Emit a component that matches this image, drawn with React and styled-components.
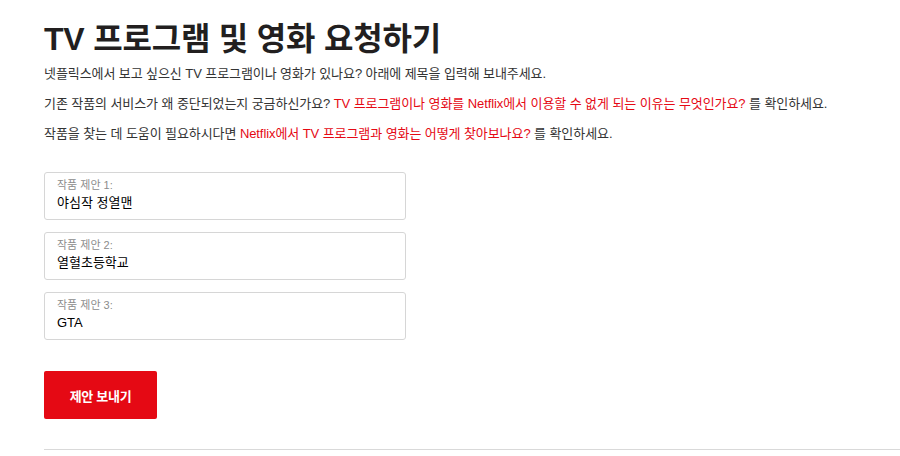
import React from "react";
import styled, { createGlobalStyle } from "styled-components";

const Global = createGlobalStyle`
  html, body { margin: 0; padding: 0; background: #fff; }
  body { font-family: "Liberation Sans", "Noto Sans CJK KR", Arial, sans-serif; color: #221f1f; }
  * { box-sizing: border-box; }
`;

const Page = styled.div`
  padding: 14px 0 0 44px;
  width: 900px;
  height: 456px;
  overflow: hidden;
`;

const Title = styled.h1`
  margin: 0 0 1px;
  font-size: 32px;
  font-weight: 700;
  line-height: 50px;
  letter-spacing: -0.2px;
  color: #221f1f;
`;

const Para = styled.p`
  margin: 0 0 12px;
  font-size: 13px;
  line-height: 18px;
  letter-spacing: -0.08px;
  color: #333;
`;

const Link = styled.a`
  color: #e50914;
  text-decoration: none;
`;

const Form = styled.form`
  margin-top: 29px;
  display: flex;
  flex-direction: column;
  gap: 12px;
  width: 362px;
`;

const Field = styled.label`
  display: flex;
  flex-direction: column;
  height: 48px;
  border: 1px solid #d6d6d6;
  border-radius: 3px;
  padding: 5px 12px 0;
`;

const FieldLabel = styled.span`
  font-size: 11px;
  line-height: 14px;
  color: #8c8c8c;
`;

const FieldValue = styled.span`
  font-size: 13px;
  line-height: 20px;
  margin-top: 1px;
  color: #000;
`;

const Submit = styled.button`
  margin-top: 31px;
  width: 113px;
  height: 48px;
  border: none;
  border-radius: 2px;
  background: #e50914;
  color: #fff;
  font-family: inherit;
  font-size: 13px;
  font-weight: 700;
  letter-spacing: -0.3px;
`;

const Rule = styled.hr`
  margin: 30px 0 0;
  border: none;
  border-top: 1px solid #d9d9d9;
`;

const items = ["야심작 정열맨", "열혈초등학교", "GTA"];

export default function App() {
  return (
    <Page>
      <Global />
      <Title>TV 프로그램 및 영화 요청하기</Title>
      <Para>넷플릭스에서 보고 싶으신 TV 프로그램이나 영화가 있나요? 아래에 제목을 입력해 보내주세요.</Para>
      <Para>
        기존 작품의 서비스가 왜 중단되었는지 궁금하신가요?{" "}
        <Link>TV 프로그램이나 영화를 Netflix에서 이용할 수 없게 되는 이유는 무엇인가요?</Link> 를 확인하세요.
      </Para>
      <Para>
        작품을 찾는 데 도움이 필요하시다면 <Link>Netflix에서 TV 프로그램과 영화는 어떻게 찾아보나요?</Link> 를 확인하세요.
      </Para>
      <Form onSubmit={(e) => e.preventDefault()}>
        {items.map((v, i) => (
          <Field key={i}>
            <FieldLabel>작품 제안 {i + 1}:</FieldLabel>
            <FieldValue>{v}</FieldValue>
          </Field>
        ))}
      </Form>
      <Submit type="button">제안 보내기</Submit>
      <Rule />
    </Page>
  );
}
